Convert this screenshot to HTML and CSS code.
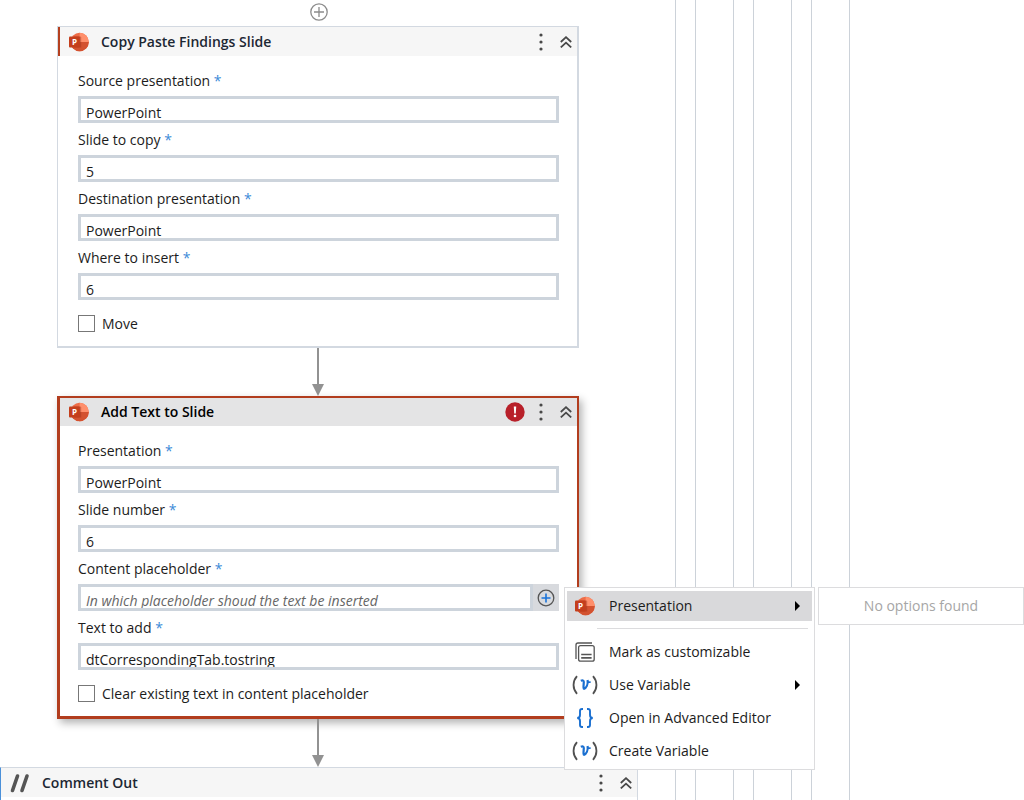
FILE: index.html
```html
<!DOCTYPE html>
<html lang="en">
<head>
    <meta charset="UTF-8">
    <meta name="viewport" content="width=device-width, initial-scale=1.0">
    <title>Workflow Designer</title>
    <link rel="stylesheet" href="styles.css">
</head>
<body>
    <!-- Shared icons -->
    <svg class="sprite" aria-hidden="true">
        <symbol id="icon-powerpoint" viewBox="0 0 20 20">
            <circle cx="10.6" cy="10" r="9.2" fill="#ed6c47"/>
            <path d="M10.6 .8a9.2 9.2 0 0 1 9.2 9.2h-9.2z" fill="#ff8f6b"/>
            <path d="M1.4 10h18.4a9.2 9.2 0 0 1-18.4 0z" fill="#d35230"/>
            <path d="M5 4.4h6.2a1 1 0 0 1 1 1v10.2H5z" fill="#9b341a" opacity=".45"/>
            <rect x="0" y="4.6" width="10.8" height="10.8" rx="1" fill="#c43e1c"/>
            <text x="5.5" y="13.2" text-anchor="middle" class="icon-letter">P</text>
        </symbol>
        <symbol id="icon-dots" viewBox="0 0 4 18">
            <circle cx="2" cy="2" r="1.6"/>
            <circle cx="2" cy="9" r="1.6"/>
            <circle cx="2" cy="16" r="1.6"/>
        </symbol>
        <symbol id="icon-collapse" viewBox="0 0 12 12">
            <path d="M.8 6 6 1.2 11.2 6M.8 11.4 6 6.6l5.2 4.8" fill="none" stroke="#484848" stroke-width="1.8"/>
        </symbol>
        <symbol id="icon-variable" viewBox="0 0 26 20">
            <path d="M5 1.200C.4 6.500.4 13.500 5 18.800M21 1.200c4.600 5.300 4.600 12.300 0 17.600" fill="none" stroke="#505050" stroke-width="1.800"/>
            <path d="M8.800 5.800c1.800-.8 3-.6 3 1.200 0 1.800-.8 6.800.2 6.800 2.200-1 4.200-4.400 3.600-8.800" fill="none" stroke="#1a6fd0" stroke-width="2.200"/>
            <path d="M15.600 6.600c.8.800 1.800.8 3 .2" fill="none" stroke="#1a6fd0" stroke-width="1.600"/>
        </symbol>
    </svg>

    <main class="designer">
        <div class="sequence">
            <div class="steps">
                <button type="button" class="add-activity" aria-label="Add activity">
                    <svg width="18" height="18" viewBox="0 0 18 18" fill="none" stroke="#8c8c8c" stroke-width="1.3">
                        <circle cx="9" cy="9" r="8.2"/>
                        <path d="M9 4v10M4 9h10"/>
                    </svg>
                </button>

                <section class="activity">
                    <header class="activity-header">
                        <svg class="app-icon"><use href="#icon-powerpoint"/></svg>
                        <h2>Copy Paste Findings Slide</h2>
                        <button type="button" class="icon-btn" aria-label="Options"><svg class="dots"><use href="#icon-dots"/></svg></button>
                        <button type="button" class="icon-btn" aria-label="Collapse"><svg class="collapse"><use href="#icon-collapse"/></svg></button>
                    </header>
                    <div class="activity-body">
                        <div class="field">
                            <label for="source">Source presentation <span class="required">*</span></label>
                            <input type="text" id="source" value="PowerPoint">
                        </div>
                        <div class="field">
                            <label for="slide-copy">Slide to copy <span class="required">*</span></label>
                            <input type="text" id="slide-copy" value="5">
                        </div>
                        <div class="field">
                            <label for="destination">Destination presentation <span class="required">*</span></label>
                            <input type="text" id="destination" value="PowerPoint">
                        </div>
                        <div class="field">
                            <label for="insert-at">Where to insert <span class="required">*</span></label>
                            <input type="text" id="insert-at" value="6">
                        </div>
                        <div class="check">
                            <input type="checkbox" id="move">
                            <label for="move">Move</label>
                        </div>
                    </div>
                </section>

                <div class="connector"></div>

                <section class="activity selected">
                    <header class="activity-header">
                        <svg class="app-icon"><use href="#icon-powerpoint"/></svg>
                        <h2>Add Text to Slide</h2>
                        <svg class="error-icon" viewBox="0 0 20 20" role="img" aria-label="Error">
                            <circle cx="10" cy="10" r="9.7" fill="#b8202a"/>
                            <path d="M8.800 4.500h2.400l-.4 7h-1.600z" fill="#fff"/>
                            <circle cx="10" cy="14" r="1.300" fill="#fff"/>
                        </svg>
                        <button type="button" class="icon-btn" aria-label="Options"><svg class="dots"><use href="#icon-dots"/></svg></button>
                        <button type="button" class="icon-btn" aria-label="Collapse"><svg class="collapse"><use href="#icon-collapse"/></svg></button>
                    </header>
                    <div class="activity-body">
                        <div class="field">
                            <label for="presentation">Presentation <span class="required">*</span></label>
                            <input type="text" id="presentation" value="PowerPoint">
                        </div>
                        <div class="field">
                            <label for="slide-number">Slide number <span class="required">*</span></label>
                            <input type="text" id="slide-number" value="6">
                        </div>
                        <div class="field">
                            <label for="placeholder">Content placeholder <span class="required">*</span></label>
                            <div class="input-group">
                                <input type="text" id="placeholder" placeholder="In which placeholder shoud the text be inserted">
                                <button type="button" class="add-value" aria-label="Add value">
                                    <svg width="18" height="18" viewBox="0 0 18 18" fill="none">
                                        <circle cx="9" cy="9" r="7.800" stroke="#555" stroke-width="1.300"/>
                                        <path d="M9 4.500v9M4.500 9h9" stroke="#1a73d9" stroke-width="1.600"/>
                                    </svg>
                                </button>
                                <div class="menu" role="menu">
                                    <button type="button" class="menu-item active" role="menuitem">
                                        <svg class="app-icon"><use href="#icon-powerpoint"/></svg>
                                        <span>Presentation</span>
                                        <span class="caret"></span>
                                    </button>
                                    <hr>
                                    <button type="button" class="menu-item" role="menuitem">
                                        <svg width="20" height="20" viewBox="0 0 20 20" fill="none" stroke="#555" stroke-width="1.300">
                                            <path d="M1 17V3a2 2 0 0 1 2-2h14"/>
                                            <rect x="3.600" y="3.600" width="15.600" height="15.600" rx="2"/>
                                            <path d="M6.200 12.500h10.400M6.200 15.800h10.400" stroke-width="1.700"/>
                                        </svg>
                                        <span>Mark as customizable</span>
                                    </button>
                                    <button type="button" class="menu-item" role="menuitem">
                                        <svg class="variable-icon"><use href="#icon-variable"/></svg>
                                        <span>Use Variable</span>
                                        <span class="caret"></span>
                                    </button>
                                    <button type="button" class="menu-item" role="menuitem">
                                        <svg width="18" height="20" viewBox="0 0 18 20" fill="none" stroke="#1a6fd0" stroke-width="1.900">
                                            <path d="M7 1H6C4.500 1 4 1.800 4 3v4c0 1.800-.8 3-2.800 3C3.200 10 4 11.200 4 13v4c0 1.200.5 2 2 2h1"/>
                                            <path d="M11 1h1c1.500 0 2 .8 2 2v4c0 1.800.8 3 2.800 3-2 0-2.800 1.200-2.800 3v4c0 1.200-.5 2-2 2h-1"/>
                                        </svg>
                                        <span>Open in Advanced Editor</span>
                                    </button>
                                    <button type="button" class="menu-item" role="menuitem">
                                        <svg class="variable-icon"><use href="#icon-variable"/></svg>
                                        <span>Create Variable</span>
                                    </button>
                                    <div class="submenu">No options found</div>
                                </div>
                            </div>
                        </div>
                        <div class="field">
                            <label for="text-add">Text to add <span class="required">*</span></label>
                            <input type="text" id="text-add" value="dtCorrespondingTab.tostring">
                        </div>
                        <div class="check">
                            <input type="checkbox" id="clear">
                            <label for="clear">Clear existing text in content placeholder</label>
                        </div>
                    </div>
                </section>

                <div class="connector"></div>
            </div>

            <section class="comment-out">
                <header class="activity-header">
                    <svg width="20" height="20" viewBox="0 0 20 20" stroke="#555" stroke-width="3.600" stroke-linecap="round">
                        <path d="M2.500 17.500l5-14.500M12 17.500l5-14.500"/>
                    </svg>
                    <h2>Comment Out</h2>
                    <button type="button" class="icon-btn" aria-label="Options"><svg class="dots"><use href="#icon-dots"/></svg></button>
                    <button type="button" class="icon-btn" aria-label="Collapse"><svg class="collapse"><use href="#icon-collapse"/></svg></button>
                </header>
            </section>
        </div>

        <!-- Right edges of the enclosing containers -->
        <div class="rails">
            <span class="rail"></span>
            <span class="rail"></span>
            <span class="rail"></span>
            <span class="rail last"></span>
        </div>
    </main>
</body>
</html>
```

FILE: styles.css
```css
* {
    margin: 0;
    padding: 0;
    box-sizing: border-box;
}

body {
    font-family: 'Open Sans', 'Noto Sans', sans-serif;
    font-size: 14px;
    line-height: 20px;
    color: #1c1c1c;
    background: #fff;
}

button, input {
    font: inherit;
    color: inherit;
}

button {
    background: none;
    border: none;
    cursor: pointer;
}

svg {
    display: block;
    flex: none;
}

.sprite {
    display: none;
}

.icon-letter {
    font-size: 8px;
    font-weight: 700;
    fill: white;
}

.designer {
    display: flex;
    gap: 37px;
    height: 100vh;
    overflow: hidden;
}

.sequence {
    flex: 0 1 638px;
    display: flex;
    flex-direction: column;
}

.steps {
    display: flex;
    flex-direction: column;
    align-items: center;
    padding-right: 2px;
}

.add-activity {
    padding: 3px 0 5px 2px;
}

.activity {
    width: 100%;
    max-width: 522px;
    border: 1px solid #d3d9e1;
    border-width: 1px 2px 2px 1px;
    background: #fff;
}

.activity-header {
    display: flex;
    align-items: center;
    height: 29px;
    padding: 0 5px 0 9px;
    background: #f6f6f6;
    border-left: 2px solid #b5401f;
}

.activity-header h2 {
    flex: 1;
    margin-left: 12px;
    font-size: 14px;
    font-weight: 600;
    color: #1c2733;
}

.app-icon {
    width: 20px;
    height: 20px;
}

.icon-btn {
    display: flex;
    justify-content: center;
    width: 12px;
}

.icon-btn + .icon-btn {
    margin-left: 13px;
}

.dots {
    width: 4px;
    height: 18px;
    fill: #484848;
}

.collapse {
    width: 12px;
    height: 12px;
}

.activity-body {
    display: flex;
    flex-direction: column;
    gap: 7px;
    padding: 15px 18px 14px 20px;
}

.field label {
    display: block;
    margin-bottom: 5px;
}

.required {
    color: #3c8ad8;
}

input[type="text"] {
    display: block;
    width: 100%;
    height: 27px;
    padding: 7px 5px 2px;
    border: 3px solid #cdd4dc;
    background: #fff;
    outline: none;
}

input::placeholder {
    color: #666;
    font-style: italic;
    opacity: 1;
}

.check {
    display: flex;
    align-items: center;
    gap: 7px;
    height: 17px;
    margin-top: 8px;
}

input[type="checkbox"] {
    appearance: none;
    width: 17px;
    height: 17px;
    border: 1px solid #777;
}

/* Selected activity */
.selected {
    border: 3px solid #b23d1e;
    border-width: 2px 2px 3px 3px;
    box-shadow: 3px 4px 8px rgba(0, 0, 0, 0.3);
}

.selected .activity-header {
    height: 28px;
    padding-left: 9px;
    background: #e4e4e5;
    border-left: none;
}

.selected h2 {
    color: #000;
}

.selected .activity-body {
    padding-left: 18px;
}

.error-icon {
    width: 20px;
    height: 20px;
    margin-right: 10px;
}

.connector {
    display: flex;
    flex-direction: column;
    align-items: center;
    height: 48px;
}

.connector::before {
    content: "";
    flex: 1;
    width: 2px;
    background: #929292;
}

.connector::after {
    content: "";
    border: 6px solid transparent;
    border-top: 12px solid #929292;
    border-bottom: none;
}

/* Value picker */
.input-group {
    position: relative;
    display: flex;
}

.input-group input[type="text"] {
    flex: 1;
}

.add-value {
    display: flex;
    align-items: center;
    justify-content: center;
    width: 26px;
    height: 27px;
    background: #d8dade;
}

.menu {
    position: absolute;
    top: 3px;
    left: calc(100% + 5px);
    z-index: 10;
    width: 251px;
    padding: 3px 2px 2px;
    border: 1px solid #dcdcde;
    background: #fff;
}

.menu-item {
    display: grid;
    grid-template-columns: 36px 1fr auto;
    align-items: center;
    width: 100%;
    height: 33px;
    padding-right: 12px;
    text-align: left;
}

.menu-item svg {
    justify-self: center;
}

.menu-item span {
    padding-left: 6px;
}

.menu-item.active {
    height: 30px;
    background: #d9d9db;
}

.menu hr {
    margin: 7px 4px 6px 30px;
    border: none;
    border-top: 1px solid #dcdcde;
}

.menu-item .caret {
    padding: 0;
    border: 5px solid transparent;
    border-left: 5px solid #000;
    border-right: none;
}

.variable-icon {
    width: 26px;
    height: 20px;
}

.submenu {
    position: absolute;
    top: -1px;
    left: calc(100% + 4px);
    width: 206px;
    padding: 8px;
    border: 1px solid #dcdcde;
    background: #fff;
    color: #a6a6a6;
    text-align: center;
}

/* Commented block */
.comment-out {
    flex: 1;
    border: 1px solid #d3d9e1;
    border-left-color: #4a90d9;
    border-bottom: none;
}

.comment-out .activity-header {
    border-left: none;
}

.rails {
    display: flex;
    gap: 37px;
}

.rail {
    width: 21px;
    border: 1px solid #ccd2d9;
    border-width: 0 1px;
}

.rail.last {
    border-right: none;
}
```
